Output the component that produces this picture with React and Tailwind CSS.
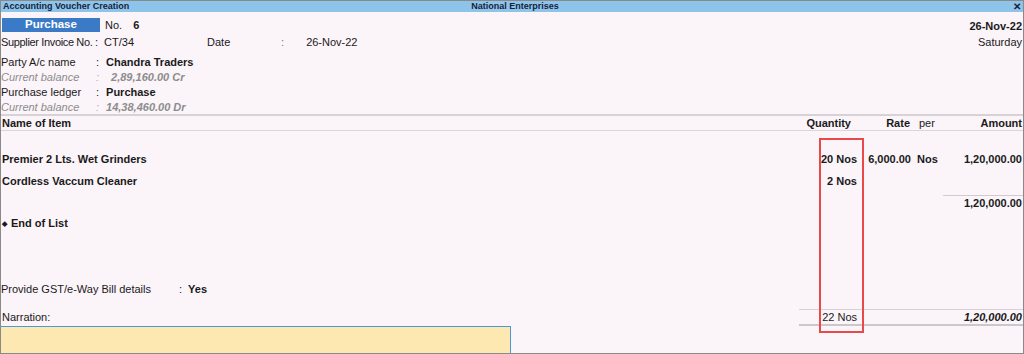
import React from 'react';

const font = { fontFamily: '"Liberation Sans", Arial, sans-serif' };

const Field = ({ label, value, labelW = 'w-[95px]', muted, bold = true, valuePad = 'pl-[7px]' }) => (
  <div className={`flex items-center whitespace-nowrap ${muted ? 'text-[#8c8c8c] italic' : 'text-[#1a1a1a]'}`}>
    <span className={`${labelW} shrink-0`}>{label}</span>
    <span className={muted ? 'text-[#b0b0b0]' : ''}>:</span>
    <span className={`${valuePad} ${bold ? 'font-bold' : ''}`}>{value}</span>
  </div>
);

const ItemRow = ({ name, qty, rate, per, amount, className = 'h-[16px]' }) => (
  <div className={`flex items-center font-bold whitespace-nowrap ${className}`}>
    <span className="w-[799px] shrink-0 pl-[1px]">{name}</span>
    <span className="w-[61px] shrink-0 text-right pr-[4px]">{qty}</span>
    <span className="w-[52px] shrink-0 text-right pr-[2px]">{rate}</span>
    <span className="w-[30px] shrink-0 pl-[4px]">{per}</span>
    <span className="flex-1 text-right pr-[1px]">{amount}</span>
  </div>
);

export default function App() {
  return (
    <div
      className="relative w-[1024px] h-[354px] overflow-hidden border border-[#8a8a8a] bg-[#fbf4f9] text-[11px] leading-none text-[#1a1a1a]"
      style={font}
    >
      {/* title bar */}
      <div className="grid grid-cols-[1fr_auto_1fr] items-center h-[11px] bg-[#8fc4ea] text-[9px] font-bold text-[#14233c] px-[2px] whitespace-nowrap">
        <span>Accounting Voucher Creation</span>
        <span className="pl-[6px]">National Enterprises</span>
        <span className="text-right text-[10px]">✕</span>
      </div>

      {/* header */}
      <div className="flex items-center justify-between mt-[6px] h-[14px] whitespace-nowrap">
        <div className="flex items-center">
          <div className="w-[98px] h-[14px] ml-[1px] bg-[#3b7ac6] text-white font-bold text-[11.5px] flex items-center justify-center">
            Purchase
          </div>
          <span className="ml-[5px]">No.</span>
          <span className="ml-[11px] font-bold">6</span>
        </div>
        <span className="font-bold pr-[1px] mt-[2px]">26-Nov-22</span>
      </div>

      <div className="flex items-center justify-between mt-[2px] h-[16px] whitespace-nowrap">
        <div className="flex items-center">
          <span className="w-[94px] shrink-0 tracking-[-0.35px]">Supplier Invoice No.</span>
          <span>:</span>
          <span className="pl-[6px] w-[109px] shrink-0">CT/34</span>
          <span className="w-[74px] shrink-0">Date</span>
          <span className="text-[#777]">:</span>
          <span className="pl-[22px]">26-Nov-22</span>
        </div>
        <span className="pr-[1px]">Saturday</span>
      </div>

      <div className="mt-[4px] flex flex-col">
        <div className="h-[16px] flex items-center">
          <Field label="Party A/c name" value="Chandra Traders" />
        </div>
        <div className="h-[15px] flex items-center">
          <Field label="Current balance" value="2,89,160.00 Cr" muted valuePad="pl-[12px]" />
        </div>
        <div className="h-[15px] flex items-center">
          <Field label="Purchase ledger" value="Purchase" />
        </div>
        <div className="h-[14px] flex items-center">
          <Field label="Current balance" value="14,38,460.00 Dr" muted />
        </div>
      </div>

      {/* table header */}
      <div className="border-t-2 border-[#d6d2d6]" />
      <div className="flex items-center h-[15px] font-bold border-b border-[#d9d6d9] whitespace-nowrap">
        <span className="w-[799px] shrink-0 pl-[1px]">Name of Item</span>
        <span className="w-[61px] shrink-0 text-right pr-[10px]">Quantity</span>
        <span className="w-[52px] shrink-0 text-right pr-[3px]">Rate</span>
        <span className="w-[30px] shrink-0 pl-[6px] font-normal">per</span>
        <span className="flex-1 text-right pr-[1px]">Amount</span>
      </div>

      {/* items */}
      <ItemRow className="h-[16px] mt-[20px]" name="Premier 2 Lts. Wet Grinders" qty="20 Nos" rate="6,000.00" per="Nos" amount="1,20,000.00" />
      <ItemRow className="h-[16px] mt-[6px]" name="Cordless Vaccum Cleaner" qty="2 Nos" />

      <div className="flex mt-[6px] h-[16px]">
        <span className="flex-1" />
        <span className="w-[80px] border-t border-[#cfcbcf] flex items-center justify-end pr-[1px] font-bold">1,20,000.00</span>
      </div>

      <div className="flex items-center h-[16px] mt-[4px] font-bold">
        <span className="text-[7px] mr-[4px] pl-[1px]">◆</span>
        <span>End of List</span>
      </div>

      <div className="flex items-center h-[16px] mt-[50px] whitespace-nowrap">
        <span className="w-[178px] shrink-0">Provide GST/e-Way Bill details</span>
        <span>:</span>
        <span className="pl-[6px] font-bold">Yes</span>
      </div>

      {/* narration + totals */}
      <div className="flex mt-[12px] h-[17px] whitespace-nowrap">
        <span className="w-[798px] shrink-0 flex items-center pl-[1px]">Narration:</span>
        <div className="flex-1 flex items-center border-t border-b-2 border-t-[#d6d2d6] border-b-[#cbc7cb]">
          <span className="w-[62px] text-right pr-[4px]">22 Nos</span>
          <span className="flex-1 text-right pr-[1px] font-bold italic">1,20,000.00</span>
        </div>
      </div>

      <div className="w-[510px] h-[27px] bg-[#fde8b2] border-t border-r border-[#4a9ad8]" />

      {/* annotation */}
      <div className="absolute left-[818px] top-[137px] w-[45px] h-[195px] border-2 border-[#e84a4a]" />
    </div>
  );
}
